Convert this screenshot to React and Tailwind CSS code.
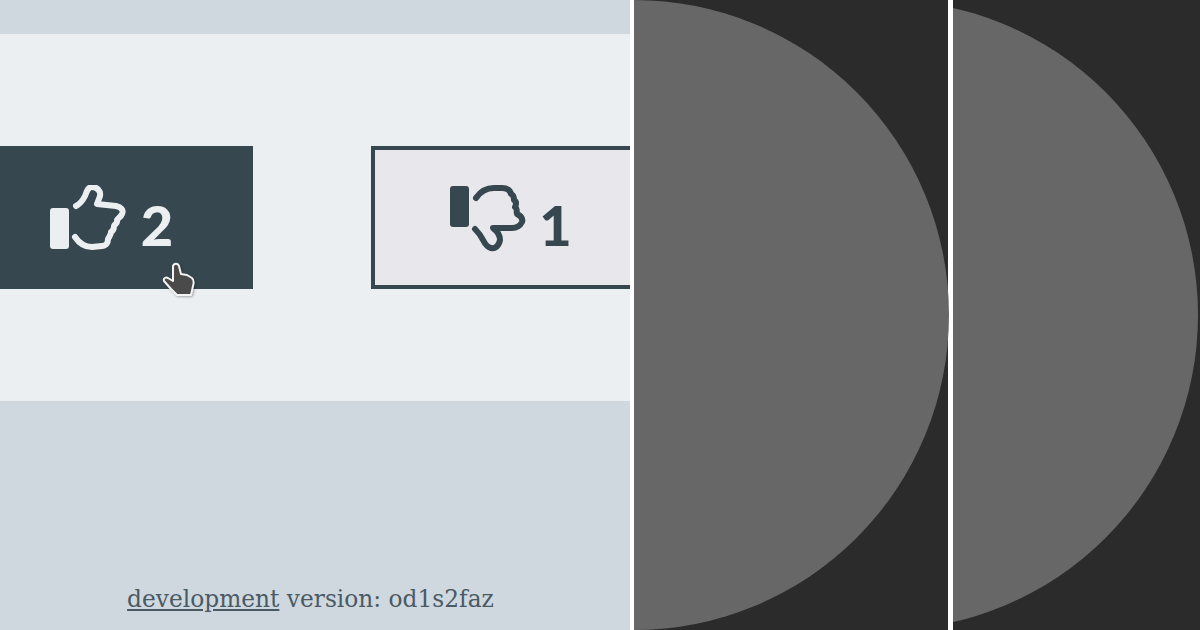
import React from 'react';

const ThumbUp = () => (
  <svg width="78" height="66" viewBox="49 185 78 66" className="block shrink-0">
    <rect x="50" y="208" width="19" height="41" rx="3" fill="#ebeff2" />
    <path
      d="M76 206 C80 204 83 200 85 196 C87 191 88 187 92 187 C97 187 101 191 100 196 C99 199 98 201 97 204 L116 206 C121 207 124 210 122 214 C121 217 118 218 117 220 C118 223 115 224 114 226 C114 229 113 231 111 232 C111 235 109 237 108 239 C108 243 106 246 102 246 L92 247 C84 247 79 243 75 237"
      fill="none"
      stroke="#ebeff2"
      strokeWidth="6"
      strokeLinecap="round"
      strokeLinejoin="round"
    />
  </svg>
);

const ThumbDown = () => (
  <svg width="76" height="66" viewBox="448 184 76 66" className="block shrink-0 overflow-visible">
    <rect x="450" y="185" width="19" height="41" rx="3" fill="#36474f" />
    <path
      d="M476 197 C480 191 486 187 494 187 L502 187 C507 187 510 189 511 193 C514 194 514 197 514 199 C517 201 516 204 515 206 C518 208 516 211 517 213 C521 215 523 218 522 221 C520 225 517 227 512 227 L493 227 C497 230 500 234 500 239 C499 245 495 248 491 247 C487 246 485 243 483 239 C481 235 478 231 475 228"
      fill="none"
      stroke="#36474f"
      strokeWidth="6"
      strokeLinecap="round"
      strokeLinejoin="round"
    />
  </svg>
);

const HandCursor = () => (
  <svg width="38" height="40" viewBox="160 261 38 40" className="absolute left-[160px] top-[261px] drop-shadow-[1px_1px_1px_rgba(0,0,0,0.3)]">
    <path
      d="M173 266 C174 263 178 263 179 266 L181 274 L187 275 L192 278 C194 280 194 283 193 286 L191 295 L177 295 L171 289 L164 281 C163 278 166 277 168 278 L173 281 Z"
      fill="#4a4a4a"
      stroke="#f4f4f4"
      strokeWidth="2"
      strokeLinejoin="round"
    />
  </svg>
);

export default function App() {
  return (
    <div className="flex h-[630px] w-[1200px] overflow-hidden bg-white">
      <div className="relative flex h-full w-[630px] shrink-0 flex-col overflow-hidden bg-[#cfd8df]">
        <div className="mt-[34px] flex h-[367px] items-center gap-[118px] bg-[#ebeff2]">
          <button className="-ml-[31px] flex h-[143px] w-[284px] shrink-0 items-center justify-center gap-[14px] bg-[#36474f] font-['Lato',sans-serif] text-[56px] font-black text-[#ebeff2]">
            <ThumbUp />
            <span className="mt-[14px] leading-none">2</span>
          </button>
          <button className="flex h-[143px] w-[278px] shrink-0 items-center justify-center gap-[15px] border-4 border-[#36474f] bg-[#e8e8ec] font-['Lato',sans-serif] text-[56px] font-black text-[#36474f]">
            <ThumbDown />
            <span className="mt-[14px] leading-none">1</span>
          </button>
        </div>
        <p className="mt-auto pb-[16px] pr-[9px] text-center font-['DejaVu_Serif',serif] text-[23.3px] leading-[30px] text-[#4a5a64]">
          <a className="underline">development</a> version: od1s2faz
        </p>
        <HandCursor />
      </div>
      <div className="ml-[4px] h-full w-[314px] shrink-0 bg-[#2b2b2b]">
        <div className="h-[630px] w-[315px] rounded-r-[315px] bg-[#676767]" />
      </div>
      <div className="ml-[5px] h-full w-[247px] shrink-0 overflow-hidden bg-[#2b2b2b]">
        <div className="-ml-[70px] h-[630px] w-[315px] rounded-r-[315px] bg-[#676767]" />
      </div>
    </div>
  );
}
